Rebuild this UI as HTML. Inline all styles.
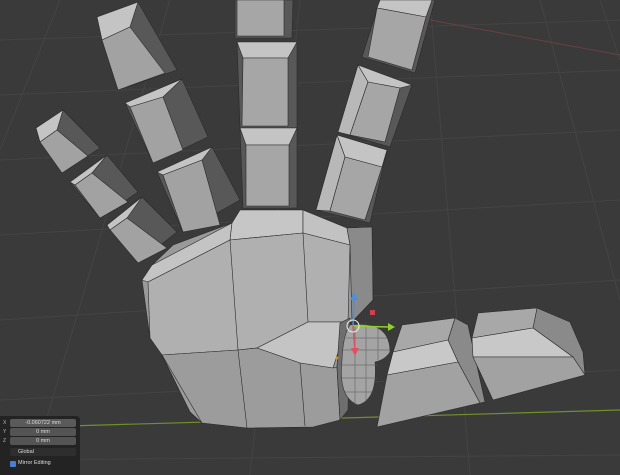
<!DOCTYPE html>
<html><head><style>
html,body{margin:0;padding:0;width:620px;height:475px;overflow:hidden;background:#3a3a3a;font-family:"Liberation Sans",sans-serif}
svg{position:absolute;left:0;top:0}
.panel{position:absolute;left:0;top:416px;width:80px;height:59px;background:#232323;border-radius:0 4px 0 0;}
.f{position:absolute;left:10px;width:66px;height:8px;background:#545454;border-radius:2px;color:#ddd;font-size:5.5px;text-align:center;line-height:8px}
.l{position:absolute;left:3px;color:#bbb;font-size:5px}
</style></head><body>
<svg width="620" height="475" viewBox="0 0 620 475">
<g stroke="#444" stroke-width="1" fill="none">
<line x1="0" y1="40" x2="620" y2="20"/><line x1="0" y1="95" x2="620" y2="70"/><line x1="0" y1="160" x2="620" y2="130"/>
<line x1="0" y1="235" x2="620" y2="200"/><line x1="0" y1="320" x2="620" y2="280"/><line x1="0" y1="400" x2="620" y2="370"/>
<line x1="0" y1="460" x2="620" y2="455"/>
<line x1="60" y1="0" x2="0" y2="150"/><line x1="170" y1="0" x2="30" y2="475"/><line x1="300" y1="0" x2="250" y2="475"/>
<line x1="430" y1="0" x2="470" y2="475"/><line x1="540" y1="0" x2="620" y2="300"/><line x1="600" y1="0" x2="620" y2="60"/>
</g>
<line x1="0" y1="428" x2="620" y2="410" stroke="#6f8f2c" stroke-width="1.2"/>
<line x1="430" y1="20" x2="620" y2="55" stroke="#6a4040" stroke-width="1"/>
<g stroke="#2a2a2a" stroke-width=".6" stroke-linejoin="round">
<!-- pinky -->
<polygon points="36,128 63,110 100,148 62,173 40,142" fill="#585858"/>
<polygon points="36,128 63,110 57,130 40,142" fill="#c4c4c4"/>
<polygon points="40,142 57,130 88,156 62,173" fill="#a2a2a2"/>
<polygon points="70,182 107,155 138,192 100,218" fill="#585858"/>
<polygon points="70,182 107,155 92,173 75,185" fill="#c4c4c4"/>
<polygon points="75,185 92,173 128,202 100,218" fill="#a2a2a2"/>
<polygon points="107,225 142,197 177,232 138,263" fill="#585858"/>
<polygon points="107,225 142,197 127,218 110,230" fill="#c4c4c4"/>
<polygon points="110,230 127,218 167,248 138,263" fill="#a2a2a2"/>
<!-- ring -->
<polygon points="97,17 138,2 177,70 118,90" fill="#585858"/>
<polygon points="97,17 138,2 130,27 102,40" fill="#c4c4c4"/>
<polygon points="102,40 130,27 165,73 118,90" fill="#a2a2a2"/>
<polygon points="125,103 182,79 208,137 153,163" fill="#585858"/>
<polygon points="125,103 182,79 163,97 130,107" fill="#c4c4c4"/>
<polygon points="130,107 163,97 183,150 153,163" fill="#a2a2a2"/>
<polygon points="157,172 212,147 240,200 183,232" fill="#585858"/>
<polygon points="157,172 212,147 202,160 163,175" fill="#c4c4c4"/>
<polygon points="163,175 202,160 220,225 183,232" fill="#a2a2a2"/>
<!-- middle -->
<polygon points="235,0 293,0 292,38 235,38" fill="#585858"/>
<polygon points="237,0 284,0 284,36 237,36" fill="#a6a6a6"/>
<polygon points="237,42 297,42 297,128 240,128" fill="#585858"/>
<polygon points="237,42 297,42 288,58 243,58" fill="#c4c4c4"/>
<polygon points="243,58 288,58 288,126 242,126" fill="#a6a6a6"/>
<polygon points="240,128 297,128 297,208 243,208" fill="#585858"/>
<polygon points="240,128 297,128 289,145 246,145" fill="#c4c4c4"/>
<polygon points="246,145 289,145 289,206 246,206" fill="#a6a6a6"/>
<!-- index -->
<polygon points="380,0 435,0 415,73 362,57" fill="#585858"/>
<polygon points="380,0 432,0 426,17 377,8" fill="#c4c4c4"/>
<polygon points="377,8 426,17 412,70 368,57" fill="#a6a6a6"/>
<polygon points="358,65 412,85 390,147 338,132" fill="#585858"/>
<polygon points="358,65 412,85 400,88 368,82" fill="#c4c4c4"/>
<polygon points="338,132 358,65 368,82 350,135" fill="#b8b8b8"/>
<polygon points="368,82 400,88 385,142 350,135" fill="#a6a6a6"/>
<polygon points="337,135 387,150 370,223 316,210" fill="#585858"/>
<polygon points="337,135 387,150 382,167 345,157" fill="#c4c4c4"/>
<polygon points="316,210 337,135 345,157 330,211" fill="#b8b8b8"/>
<polygon points="345,157 382,167 365,220 330,211" fill="#a6a6a6"/>
<!-- palm -->
<polygon points="142,280 152,265 173,245 232,223 240,210 303,210 347,228 372,227 373,300 352,322 340,323 337,367 340,420 313,427 247,428 202,423 190,412 162,355 150,338" fill="#9a9a9a"/>
<polygon points="152,265 232,223 230,240 148,282 142,280" fill="#c4c4c4"/>
<polygon points="232,223 240,210 303,210 303,233 230,240" fill="#c6c6c6"/>
<polygon points="303,210 347,228 350,245 303,233" fill="#c2c2c2"/>
<polygon points="347,228 372,227 373,300 352,322 350,245" fill="#8a8a8a"/>
<polygon points="148,282 230,240 303,233 350,245 348,322 308,322 257,348 238,350 162,355 150,338" fill="#b0b0b0"/>
<polygon points="257,348 308,322 348,322 333,368 300,363" fill="#c4c4c4"/>
<polygon points="162,355 238,350 257,348 300,363 333,368 337,367 340,420 313,427 247,428 202,423 190,412" fill="#9c9c9c"/>
<polygon points="340,323 350,318 348,410 340,420 337,367" fill="#6e6e6e"/>
</g>
<g stroke="#2a2a2a" stroke-width=".6" fill="none">
<line x1="230" y1="240" x2="238" y2="350"/><line x1="303" y1="233" x2="308" y2="322"/>
<line x1="238" y1="350" x2="247" y2="428"/><line x1="300" y1="363" x2="305" y2="426"/><line x1="162" y1="355" x2="202" y2="423"/>
</g>
<!-- sphere -->
<path d="M350,325 Q390,320 390,352 Q385,360 375,362 Q378,400 358,405 Q338,398 342,360 Q343,335 350,325Z" fill="#a4a4a4" stroke="#333" stroke-width=".6"/>
<g stroke="#555" stroke-width=".5" fill="none"><line x1="346" y1="338" x2="388" y2="338"/><line x1="343" y1="350" x2="390" y2="350"/><line x1="342" y1="365" x2="378" y2="365"/><line x1="342" y1="378" x2="377" y2="378"/><line x1="345" y1="392" x2="373" y2="392"/><line x1="355" y1="325" x2="355" y2="405"/><line x1="366" y1="322" x2="366" y2="402"/><line x1="378" y1="324" x2="378" y2="360"/></g>
<!-- thumb -->
<g stroke="#2a2a2a" stroke-width=".6" stroke-linejoin="round">
<polygon points="455,318 468,325 485,402 480,403 458,362 448,340" fill="#8a8a8a"/>
<polygon points="402,325 455,318 448,340 393,352" fill="#a8a8a8"/>
<polygon points="393,352 448,340 458,362 387,375" fill="#c8c8c8"/>
<polygon points="387,375 458,362 480,403 377,427" fill="#a2a2a2"/>
<polygon points="537,308 570,322 583,352 585,375 573,357 533,328" fill="#8a8a8a"/>
<polygon points="478,313 537,308 533,328 472,338" fill="#a8a8a8"/>
<polygon points="472,338 533,328 573,357 473,357" fill="#c8c8c8"/>
<polygon points="473,357 573,357 585,375 493,400" fill="#a2a2a2"/>
</g>
<!-- gizmo -->
<line x1="353" y1="326" x2="354" y2="298" stroke="#4a8fe0" stroke-width="1.5"/><polygon points="350,300 358,300 354,292" fill="#4a8fe0"/>
<line x1="353" y1="326" x2="388" y2="327" stroke="#8fd02a" stroke-width="1.5"/><polygon points="388,323 388,331 395,327" fill="#8fd02a"/>
<line x1="353" y1="326" x2="355" y2="350" stroke="#e05060" stroke-width="1.5"/><polygon points="351,348 359,348 355,356" fill="#e05060"/>
<circle cx="353" cy="326" r="6" fill="none" stroke="#eee" stroke-width="1"/>
<rect x="370" y="310" width="5" height="5" fill="#d04050"/>
<circle cx="337" cy="358" r="1.5" fill="#e08a20"/>
</svg>
<div class="panel">
<span class="l" style="top:4px">X</span><div class="f" style="top:3px;background:#5a5a5a">-0.060722 mm</div>
<span class="l" style="top:13px">Y</span><div class="f" style="top:12px">0 mm</div>
<span class="l" style="top:22px">Z</span><div class="f" style="top:21px">0 mm</div>
<div class="f" style="top:32px;background:#2e2e2e;text-align:left;padding-left:8px;width:58px">Global</div>
<div style="position:absolute;left:10px;top:45px;width:6px;height:6px;background:#4a7fd0;border-radius:1px"></div>
<span style="position:absolute;left:18px;top:44px;color:#ddd;font-size:5.5px">Mirror Editing</span>
</div>
</body></html>
